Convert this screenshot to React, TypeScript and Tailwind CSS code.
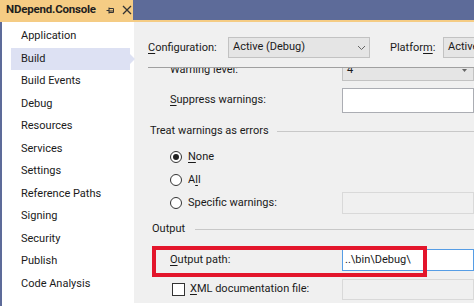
import React from 'react';

const navItems = [
  'Application',
  'Build',
  'Build Events',
  'Debug',
  'Resources',
  'Services',
  'Settings',
  'Reference Paths',
  'Signing',
  'Security',
  'Publish',
  'Code Analysis',
];

function U({ children }: { children: React.ReactNode }) {
  return <span className="underline underline-offset-[2px] decoration-[1px]">{children}</span>;
}

function Radio({ checked }: { checked?: boolean }) {
  return (
    <span className="w-[12px] h-[12px] rounded-full border border-[#333] bg-white flex items-center justify-center shrink-0">
      {checked && <span className="w-[6px] h-[6px] rounded-full bg-[#222]" />}
    </span>
  );
}

function Chevron() {
  return (
    <svg width="9" height="6" viewBox="0 0 9 6" className="shrink-0">
      <path d="M1 1 L4.5 4.5 L8 1" fill="none" stroke="#666" strokeWidth="1" />
    </svg>
  );
}

export default function App() {
  return (
    <div className="w-[474px] h-[306px] overflow-hidden bg-white font-[Roboto,sans-serif] text-[11px] text-[#1a1a1a] flex flex-col">
      {/* Title bar */}
      <div className="h-[20px] flex shrink-0 border-b-2 border-[#f5cc84] box-content">
        <div className="w-[133px] bg-[#f5cc84] flex items-center pl-[6px]">
          <span className="font-bold text-[11.5px] text-[#1e1e1e] tracking-[-0.2px]">NDepend.Console</span>
          <svg width="9" height="9" viewBox="0 0 9 9" className="ml-[10px]">
            <path d="M0.5 4.5 H3 M3 1.5 V7.5 M3 2.5 H7.5 V6.5 H3 M3 5 H7.5" fill="none" stroke="#333" strokeWidth="1" />
          </svg>
          <svg width="10" height="10" viewBox="0 0 10 10" className="ml-[7px]">
            <path d="M1 1 L9 9 M9 1 L1 9" stroke="#333" strokeWidth="1.3" />
          </svg>
        </div>
        <div className="flex-1 bg-[#5d6b99]" />
      </div>

      <div className="flex flex-1 min-h-0">
        {/* Left nav */}
        <div className="w-[134px] shrink-0 border-l-2 border-[#5d6b99] bg-white pt-[3px] flex flex-col">
          {navItems.map((item) => (
            <div key={item} className="h-[22.5px] flex items-center relative shrink-0">
              {item === 'Build' ? (
                <div className="absolute left-[9px] right-[4px] top-0 bottom-0 bg-[#dde1f3]">
                  <div className="absolute right-[-5px] top-[6px] w-0 h-0 border-y-[5px] border-y-transparent border-l-[5px] border-l-[#dde1f3]" />
                </div>
              ) : null}
              <span className="relative pl-[19px]">{item}</span>
            </div>
          ))}
        </div>

        {/* Right panel */}
        <div className="flex-1 bg-[#f0f0f0] flex flex-col min-w-0 mb-[3px]">
          <div className="h-[46px] shrink-0 ml-[14px] border-b border-[#a0a0a0] flex items-start pt-[15px] overflow-hidden">
            <span className="w-[80px] shrink-0 leading-[21px]">
              <U>C</U>onfiguration:
            </span>
            <div className="w-[142px] h-[21px] shrink-0 bg-[#e5e5e5] border border-[#c2c2c2] flex items-center pl-[4px] pr-[3px] justify-between">
              <span>Active (Debug)</span>
              <Chevron />
            </div>
            <span className="ml-[20px] w-[53px] shrink-0 leading-[21px]">
              Platfor<U>m</U>:
            </span>
            <div className="w-[60px] h-[21px] shrink-0 bg-[#e5e5e5] border border-[#c2c2c2] flex items-center pl-[4px]">
              <span>Active</span>
            </div>
          </div>

          <div className="flex-1 overflow-hidden relative flex flex-col">
            {/* Warning level (scrolled) */}
            <div className="h-[22px] mt-[-9px] shrink-0 flex items-center pl-[36px]">
              <span className="w-[172px] shrink-0">Warning level:</span>
              <div className="flex-1 h-[22px] bg-[#e5e5e5] border border-[#c2c2c2] flex items-center justify-between pl-[4px] pr-[6px]">
                <span>4</span>
                <svg width="5" height="3" viewBox="0 0 5 3"><path d="M0 0 H5 L2.5 3 Z" fill="#666" /></svg>
              </div>
            </div>

            <div className="h-[25px] mt-[7px] shrink-0 flex items-center pl-[36px]">
              <span className="w-[172px] shrink-0">
                <U>S</U>uppress warnings:
              </span>
              <div className="flex-1 h-[25px] bg-white border border-[#abadb3]" />
            </div>

            <div className="h-[22px] mt-[7px] shrink-0 flex items-center pl-[16px]">
              <span>Treat warnings as errors</span>
              <div className="flex-1 ml-[8px] border-t border-[#c8c8c8]" />
            </div>

            <div className="h-[22px] mt-[4px] shrink-0 flex items-center pl-[36px] gap-[6px]">
              <Radio checked />
              <span>
                <U>N</U>one
              </span>
            </div>
            <div className="h-[22px] mt-[1px] shrink-0 flex items-center pl-[36px] gap-[6px]">
              <Radio />
              <span>
                A<U>l</U>l
              </span>
            </div>
            <div className="h-[22px] mt-[1px] shrink-0 flex items-center pl-[36px]">
              <div className="w-[172px] shrink-0 flex items-center gap-[6px]">
                <Radio />
                <span>
                  Specif<U>i</U>c warnings:
                </span>
              </div>
              <div className="flex-1 h-[22px] bg-[#f0f0f0] border border-[#d9d9d9]" />
            </div>

            <div className="h-[22px] mt-[4px] shrink-0 flex items-center pl-[18px]">
              <span>Output</span>
              <div className="flex-1 ml-[10px] border-t border-[#c8c8c8]" />
            </div>

            <div className="h-[22px] mt-[9px] shrink-0 flex items-center pl-[36px]">
              <span className="w-[172px] shrink-0">
                <U>O</U>utput path:
              </span>
              <div className="flex-1 h-[22px] bg-white border border-[#569de5] flex items-center pl-[2px]">
                <span>..\bin\Debug\</span>
              </div>
            </div>

            <div className="h-[21px] mt-[8px] shrink-0 flex items-center pl-[38px]">
              <div className="w-[170px] shrink-0 flex items-center gap-[5px]">
                <span className="w-[13px] h-[13px] border border-[#333] bg-white shrink-0" />
                <span>
                  <U>X</U>ML documentation file:
                </span>
              </div>
              <div className="flex-1 h-[21px] bg-[#f0f0f0] border border-[#d9d9d9]" />
            </div>

            {/* Red annotation box */}
            <div className="absolute left-[18px] top-[178px] w-[275px] h-[31px] border-[4px] border-[#e3152b]" />
          </div>
        </div>
      </div>
    </div>
  );
}
